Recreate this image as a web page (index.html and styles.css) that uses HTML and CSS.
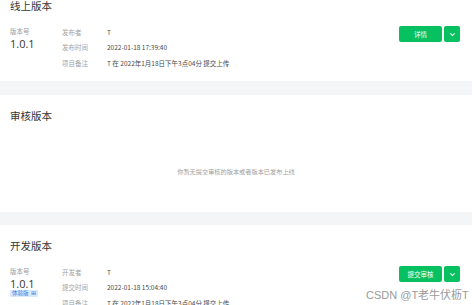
FILE: index.html
```
<!DOCTYPE html>
<html lang="zh-CN">
<head>
    <meta charset="UTF-8">
    <meta name="viewport" content="width=device-width, initial-scale=1.0">
    <title>版本管理</title>
    <link rel="stylesheet" href="styles.css">
</head>
<body>
    <div class="page">
        <div class="card card-top">
            <div class="card-title">线上版本</div>
            <div class="release">
                <div class="ver">
                    <div class="ver-label">版本号</div>
                    <div class="ver-num">1.0.1</div>
                </div>
                <div class="meta">
                    <div class="meta-label">发布者</div>
                    <div class="meta-value">T</div>
                    <div class="meta-label">发布时间</div>
                    <div class="meta-value">2022-01-18 17:39:40</div>
                    <div class="meta-label">项目备注</div>
                    <div class="meta-value">T 在 2022年1月18日下午3点04分 提交上传</div>
                </div>
                <div class="actions">
                    <button class="btn">详情</button>
                    <button class="btn btn-more">
                        <svg width="7" height="7" viewBox="0 0 10 10"><path d="M2 3.5 L5 6.5 L8 3.5" fill="none" stroke="#fff" stroke-width="1.6"/></svg>
                    </button>
                </div>
            </div>
        </div>

        <div class="card card-audit">
            <div class="card-title">审核版本</div>
            <div class="empty">你暂无提交审核的版本或者版本已发布上线</div>
        </div>

        <div class="card">
            <div class="card-title">开发版本</div>
            <div class="release">
                <div class="ver">
                    <div class="ver-label">版本号</div>
                    <div class="ver-num">1.0.1</div>
                    <div class="tag">体验版 <span class="tag-icon">⊞</span></div>
                </div>
                <div class="meta">
                    <div class="meta-label">开发者</div>
                    <div class="meta-value">T</div>
                    <div class="meta-label">提交时间</div>
                    <div class="meta-value">2022-01-18 15:04:40</div>
                    <div class="meta-label">项目备注</div>
                    <div class="meta-value">T 在 2022年1月18日下午3点04分 提交上传</div>
                </div>
                <div class="actions">
                    <button class="btn">提交审核</button>
                    <button class="btn btn-more">
                        <svg width="7" height="7" viewBox="0 0 10 10"><path d="M2 3.5 L5 6.5 L8 3.5" fill="none" stroke="#fff" stroke-width="1.6"/></svg>
                    </button>
                </div>
            </div>
        </div>
    </div>
    <div class="watermark">CSDN @T老牛伏枥T</div>
</body>
</html>
```

FILE: styles.css
```
*{
    box-sizing: border-box;
}
body{
    margin: 0;
    background: #fff;
    font-family: "Noto Sans CJK SC", "Noto Sans", sans-serif;
    color: #353535;
    overflow: hidden;
    height: 305px;
}
.page{
    width: 472px;
    background: #f4f5f7;
}
.card{
    background: #fff;
    padding: 15px 12px 10px 10px;
    margin-bottom: 14px;
}
.card-top{
    padding-top: 0;
    height: 81px;
}
.card-audit{
    height: 117px;
    margin-bottom: 13px;
}
.card-title{
    font-size: 10.5px;
    line-height: 12px;
    color: #353535;
}
.release{
    display: flex;
    align-items: flex-start;
    margin-top: 12px;
}
.ver{
    width: 52px;
}
.ver-label{
    font-size: 6.5px;
    line-height: 15.5px;
    color: #9a9a9a;
}
.ver-num{
    font-family: "Open Sans", "Noto Sans", sans-serif;
    font-size: 11px;
    line-height: 11px;
    margin-top: -2px;
    color: #353535;
}
.tag{
    display: inline-flex;
    align-items: center;
    gap: 2px;
    margin-top: 1px;
    padding: 0 2px;
    height: 7px;
    font-size: 5.5px;
    line-height: 7px;
    background: #dbe9fc;
    color: #2f7de1;
    vertical-align: top;
}
.tag-icon{
    font-size: 5.5px;
}
.meta{
    flex: 1;
    display: grid;
    grid-template-columns: 45px 1fr;
    grid-auto-rows: 15.5px;
    align-items: center;
    font-size: 6.5px;
}
.meta-label{
    color: #a3a3a3;
}
.meta-value{
    color: #4a4a4a;
}
.actions{
    display: flex;
    gap: 2px;
    margin-top: 2px;
}
.btn{
    width: 43px;
    height: 16px;
    padding: 0;
    border: none;
    border-radius: 2px;
    background: #07c160;
    color: #fff;
    font-family: "Noto Sans CJK SC", sans-serif;
    font-size: 6.5px;
    display: flex;
    align-items: center;
    justify-content: center;
}
.btn-more{
    width: 16px;
}
.empty{
    text-align: center;
    font-size: 6.2px;
    color: #a0a0a0;
    margin-top: 45px;
    padding-left: 2px;
}
.watermark{
    position: absolute;
    left: 366px;
    top: 286px;
    white-space: nowrap;
    font-family: "Liberation Sans", "Noto Sans CJK SC", sans-serif;
    font-size: 11px;
    color: #8a8a8a;
    opacity: 0.85;
}
```
